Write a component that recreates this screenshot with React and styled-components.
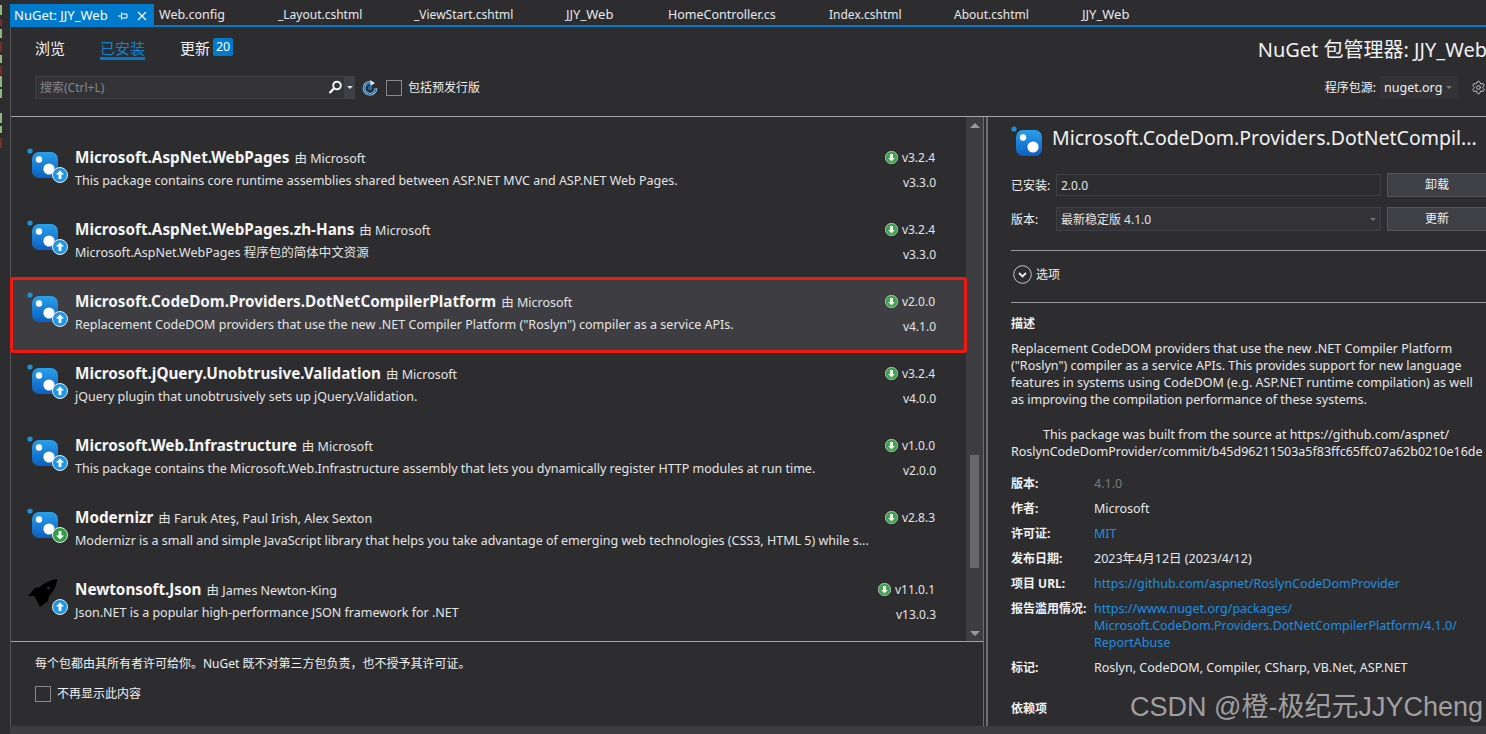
import React from "react";
import styled, { createGlobalStyle } from "styled-components";
import { Settings } from "lucide-react";

const Global = createGlobalStyle`
  html, body { margin: 0; padding: 0; background: #2d2d30; }
  * { box-sizing: border-box; }
`;
const FONT = `"Noto Sans", "Noto Sans CJK SC", sans-serif`;

const Page = styled.div`
  position: relative; width: 1486px; height: 734px; overflow: hidden; display: flex;
  background: #2d2d30; color: #f1f1f1; font: 12px/17px ${FONT};
`;
const Gutter = styled.div`
  width: 10px; flex: none; padding-top: 5px; display: flex; flex-direction: column;
`;
const GutterMark = styled.div`
  width: 2px; flex: none; height: ${p => p.$h}px; margin-bottom: ${p => p.$gap}px; background: ${p => p.$c};
`;
const Main = styled.div`
  flex: 1; min-width: 0; display: flex; flex-direction: column;
`;
const TabStrip = styled.div`
  height: 27px; flex: none; padding-top: 4px; display: flex; border-bottom: 2px solid #007acc;
`;
const ActiveTab = styled.div`
  width: 144px; flex: none; background: #007acc; color: #fff; display: flex; align-items: center; padding: 0 7px 0 4px; margin-bottom: -2px; font-size: 13px;
`;
const TabName = styled.span`
  flex: 1; white-space: nowrap;
`;
const TabGlyph = styled.svg`
  width: 10px; height: 10px; margin-left: 9px; flex: none;
`;
const Tab = styled.div`
  flex: none; width: ${p => p.$w}px; padding-left: 5px; display: flex; align-items: center; color: #e8e8e8; font-size: ${p => p.$fs}px; white-space: nowrap;
`;
const Body = styled.div`
  flex: 1; min-height: 0; display: flex; flex-direction: column; border-left: 1px solid #555558;
`;
const Header = styled.div`
  height: 90px; flex: none; display: flex; justify-content: space-between; padding-left: 24px; border-bottom: 1px solid #a5a5a5;
`;
const HeaderLeft = styled.div`
  display: flex; flex-direction: column;
`;
const Tabs = styled.div`
  display: flex; height: 34px; padding-top: 8px;
`;
const TopTab = styled.div`
  height: 25px; font-size: 15px; line-height: 26px; color: ${p => p.$active ? "#0e82d0" : "#f1f1f1"};
  margin-right: ${p => p.$gap}px; border-bottom: ${p => p.$active ? "3px solid #007acc" : "none"};
  display: flex; align-items: flex-start;
`;
const Count = styled.span`
  margin: 3px 0 0 3px; width: 20px; height: 18px; background: #007acc; color: #fff; border-radius: 2px; font-size: 12.5px; line-height: 18px; text-align: center;
`;
const SearchRow = styled.div`
  display: flex; align-items: center; margin-top: 15px;
`;
const SearchBox = styled.div`
  width: 320px; height: 23px; background: #333337; border: 1px solid #3f3f46; display: flex; align-items: center; justify-content: space-between; padding-left: 4px; color: #858585;
`;
const SearchAffix = styled.div`
  width: 28px; height: 21px; flex: none; display: flex; align-items: center; margin-right: -1px;
`;
const SearchCaret = styled.div`
  width: 11px; height: 21px; flex: none; background: #3f3f46; display: flex; align-items: center; justify-content: center;
  &::after { content: ""; border: 3px solid transparent; border-top: 3px solid #e0e0e0; border-bottom: 0; }
`;
const IconSvg = styled.svg`
  display: block; flex: none;
`;
const OverlaySvg = styled.svg`
  display: block; position: absolute; left: ${p => p.$l}px; top: ${p => p.$t}px;
`;
const RefreshWrap = styled.div`
  margin: 0 8px 0 7px; width: 16px; height: 16px;
`;
const Check = styled.div`
  width: 16px; height: 16px; border: 1px solid #8a8a8a; background: #2d2d30; flex: none;
`;
const CheckLabel = styled.span`
  margin-left: 6px; color: #f1f1f1;
`;
const HeaderRight = styled.div`
  display: flex; flex-direction: column; align-items: flex-end;
`;
const ManagerTitle = styled.div`
  font-size: 20px; line-height: 24px; margin-top: 11px; margin-right: -1px; white-space: nowrap; color: #f1f1f1;
`;
const SourceRow = styled.div`
  display: flex; align-items: center; margin-top: 14px; height: 23px; margin-right: -1px;
`;
const SourceSelect = styled.div`
  width: 78px; height: 23px; margin-left: 4px; background: #333337; padding-left: 4px; display: flex; align-items: center; justify-content: space-between; padding-right: 6px; color: #f1f1f1; font-size: 12.5px;
  &::after { content: ""; border: 3px solid transparent; border-top: 3px solid #777; border-bottom: 0; }
`;
const Gear = styled.div`
  margin-left: 13px; width: 16px; color: #c8c8c8; display: flex;
`;
const Split = styled.div`
  flex: 1; min-height: 0; display: flex;
`;
const LeftPane = styled.div`
  width: 972px; flex: none; display: flex; flex-direction: column;
`;
const ListArea = styled.div`
  height: 525px; flex: none; display: flex; border-bottom: 1px solid #a5a5a5;
`;
const List = styled.div`
  flex: 1; min-width: 0; padding-top: 18px;
`;
const Row = styled.div`
  position: relative; height: 72px; display: flex; padding: 0 30px 0 16px; background: ${p => p.$sel ? "#3e3e42" : "transparent"};
`;
const RedBox = styled.div`
  position: absolute; left: -1px; right: -1px; top: -2px; bottom: -2px; border: 3px solid #f01a10; border-radius: 3px; pointer-events: none;
`;
const IconCell = styled.div`
  position: relative; width: 48px; height: 36px; flex: none; margin-top: 12px;
`;
const RowText = styled.div`
  flex: 1; min-width: 0; padding-top: 14px;
`;
const TitleLine = styled.div`
  display: flex; align-items: baseline; height: 23px; white-space: nowrap;
`;
const PkgName = styled.span`
  font-size: 15.25px; font-weight: 700; color: #f5f5f5;
`;
const Author = styled.span`
  margin-left: 5px; font-size: 12.5px; color: #e4e4e4;
`;
const Desc = styled.div`
  font-size: 12.5px; line-height: 17px; color: #e4e4e4; white-space: nowrap;
`;
const VerCol = styled.div`
  flex: none; width: 90px; padding-top: 14px; display: flex; flex-direction: column; align-items: flex-end; font-size: 12px; line-height: 17px; color: #e4e4e4;
`;
const VerTop = styled.div`
  display: flex; align-items: center; gap: 4px; margin-right: 1px;
`;
const VerBottom = styled.div`
  margin-top: 8px;
`;
const Scrollbar = styled.div`
  width: 17px; flex: none; background: #3e3e42; display: flex; flex-direction: column; align-items: center; padding-top: 6px;
`;
const ArrowUp = styled.div`
  flex: none; border: 5px solid transparent; border-bottom: 5px solid #999; border-top: 0;
`;
const ArrowDown = styled.div`
  flex: none; margin-top: 63px; border: 5px solid transparent; border-top: 5px solid #999; border-bottom: 0;
`;
const Track = styled.div`
  flex: none; margin-top: 327px; height: 113px; width: 9px; background: #686868;
`;
const Notice = styled.div`
  padding: 13px 0 0 24px;
`;
const DontShow = styled.div`
  display: flex; align-items: center; margin-top: 13px;
`;
const SplitLines = styled.div`
  width: 5px; flex: none; height: 100%; border-left: 1px solid #6e6e70; border-right: 2px solid #6e6e70;
`;
const RightPane = styled.div`
  flex: 1; min-width: 0; padding: 8px 0 0 23px; overflow: hidden; font-size: 12px;
`;
const DetailHead = styled.div`
  display: flex; align-items: center; height: 31px; gap: 10px;
`;
const DetailIcon = styled.div`
  position: relative; width: 31px; height: 31px; flex: none;
`;
const DetailTitle = styled.div`
  font-size: 19.5px; white-space: nowrap; margin-top: -6px; color: #f1f1f1;
`;
const FormRow = styled.div`
  display: flex; align-items: center; height: 24px; margin-top: ${p => p.$mt}px;
`;
const FormLabel = styled.div`
  width: 45px; flex: none; color: #f1f1f1;
`;
const Field = styled.div`
  width: 325px; height: ${p => p.$h}px; flex: none; border: 1px solid #3f3f46; background: ${p => p.$select ? "#333337" : "#2d2d30"}; padding: 0 4px; display: flex; align-items: center; justify-content: space-between; color: #e4e4e4;
  &::after { content: ""; display: ${p => p.$select ? "block" : "none"}; border: 3px solid transparent; border-top: 3px solid #777; border-bottom: 0; }
`;
const Btn = styled.div`
  width: 100px; margin-left: 6px; flex: none; height: 24px; background: #3f3f46; border: 1px solid #55555a; text-align: center; line-height: 22px; color: #f1f1f1;
`;
const Rule = styled.div`
  height: 1px; background: #999; margin-top: ${p => p.$mt}px;
`;
const OptionLine = styled.div`
  display: flex; align-items: center; height: 20px; margin-top: 13px; gap: 4px; padding-left: 2px;
`;
const SectionLabel = styled.div`
  margin-top: ${p => p.$mt}px; font-weight: 700; color: #f1f1f1; line-height: 17px;
`;
const Para = styled.div`
  margin-top: ${p => p.$mt}px; line-height: 17px; color: #e8e8e8; white-space: nowrap; font-size: 12.5px; text-indent: ${p => p.$indent || 0}px;
`;
const Meta = styled.div`
  display: grid; grid-template-columns: 83px 1fr; margin-top: ${p => p.$mt}px; line-height: 17px;
`;
const MetaKey = styled.div`
  font-weight: 700; color: #f1f1f1;
`;
const MetaVal = styled.div`
  font-size: 12.5px; color: ${p => p.$muted ? "#7a7a7a" : p.$link ? "#1a8fe3" : "#e8e8e8"}; white-space: nowrap;
`;
const BottomBar = styled.div`
  position: absolute; left: 10px; right: 0; bottom: 0; height: 8px; background: #3e3e42;
`;
const Watermark = styled.div`
  position: absolute; left: 1130px; top: 689px; font: 27px/36px "Liberation Sans", "Noto Sans CJK SC", sans-serif; color: rgba(205,205,205,0.72); white-space: nowrap;
`;

const NugetIcon = ({ id }) => (
  <OverlaySvg width="31" height="31" viewBox="0 0 31 31" $l={0} $t={0}>
    <defs>
      <linearGradient id={id} x1="0" y1="0" x2="0" y2="1">
        <stop offset="0" stopColor="#2aa0ea" />
        <stop offset="1" stopColor="#0b5fc0" />
      </linearGradient>
    </defs>
    <circle cx="3" cy="4" r="2.6" fill="#1d8fd6" />
    <rect x="5" y="5" width="26" height="26" rx="7" fill={`url(#${id})`} />
    <circle cx="12" cy="12.5" r="3.2" fill="#fff" />
    <circle cx="22" cy="22" r="5.6" fill="#fff" />
  </OverlaySvg>
);
const Badge = ({ down }) => (
  <OverlaySvg width="16" height="16" viewBox="0 0 16 16" $l={25} $t={20}>
    <circle cx="8" cy="8" r="7.5" fill={down ? "#2f9e44" : "#1c97ea"} stroke="#e8e8e8" strokeWidth="1" />
    <path d={down ? "M8 12.5 L4 8.5 H6.6 V4 H9.4 V8.5 H12 Z" : "M8 3.5 L12 7.5 H9.4 V12 H6.6 V7.5 H4 Z"} fill="#fff" />
  </OverlaySvg>
);
const Rocket = () => (
  <OverlaySvg width="31" height="30" viewBox="0 0 31 30" $l={1} $t={0}>
    <path d="M29 0 C22 1 16 4 12 8 L7 9 L0 17 L6 17 L8 20 L12 28 L20 22 L21 17 C26 12 29 6 29 0 Z" fill="#000" />
    <circle cx="20.5" cy="9" r="1.6" fill="#2d2d30" />
  </OverlaySvg>
);
const UpdateDot = () => (
  <IconSvg width="13" height="13" viewBox="0 0 13 13">
    <circle cx="6.5" cy="6.5" r="6.2" fill="#3fa34d" stroke="#d8d8d8" strokeWidth="0.7" />
    <path d="M6.5 10.5 L3.3 7 H5.2 V3 H7.8 V7 H9.7 Z" fill="#fff" />
  </IconSvg>
);

const marks = [
  [10, "#8fb77f", 4], [7, "#7a2a2a", 3], [9, "#8fb77f", 4], [10, "#7a2a2a", 3], [8, "#8fb77f", 3],
  [9, "#7a2a2a", 1], [11, "#8fb77f", 2], [9, "#8fb77f", 15], [10, "#8fb77f", 3], [7, "#8fb77f", 5], [10, "#7a2a2a", 0],
];
const rows = [
  { name: "Microsoft.AspNet.WebPages", by: "Microsoft", desc: "This package contains core runtime assemblies shared between ASP.NET MVC and ASP.NET Web Pages.", a: "v3.2.4", b: "v3.3.0" },
  { name: "Microsoft.AspNet.WebPages.zh-Hans", by: "Microsoft", desc: "Microsoft.AspNet.WebPages 程序包的简体中文资源", a: "v3.2.4", b: "v3.3.0" },
  { name: "Microsoft.CodeDom.Providers.DotNetCompilerPlatform", by: "Microsoft", desc: 'Replacement CodeDOM providers that use the new .NET Compiler Platform ("Roslyn") compiler as a service APIs.', a: "v2.0.0", b: "v4.1.0", sel: true },
  { name: "Microsoft.jQuery.Unobtrusive.Validation", by: "Microsoft", desc: "jQuery plugin that unobtrusively sets up jQuery.Validation.", a: "v3.2.4", b: "v4.0.0" },
  { name: "Microsoft.Web.Infrastructure", by: "Microsoft", desc: "This package contains the Microsoft.Web.Infrastructure assembly that lets you dynamically register HTTP modules at run time.", a: "v1.0.0", b: "v2.0.0" },
  { name: "Modernizr", by: "Faruk Ateş, Paul Irish, Alex Sexton", desc: "Modernizr is a small and simple JavaScript library that helps you take advantage of emerging web technologies (CSS3, HTML 5) while s...", a: "v2.8.3", down: true },
  { name: "Newtonsoft.Json", by: "James Newton-King", desc: "Json.NET is a popular high-performance JSON framework for .NET", a: "v11.0.1", b: "v13.0.3", rocket: true },
];
const tabs = [
  ["Web.config", 119, 12.5], ["_Layout.cshtml", 136, 12], ["_ViewStart.cshtml", 152, 12], ["JJY_Web", 102, 13],
  ["HomeController.cs", 161, 12.5], ["Index.cshtml", 125, 12], ["About.cshtml", 128, 12], ["JJY_Web", 100, 13],
];

export default function App() {
  return (
    <Page>
      <Global />
      <Gutter>
        {marks.map(([h, c, gap], i) => <GutterMark key={i} $h={h} $c={c} $gap={gap} />)}
      </Gutter>
      <Main>
        <TabStrip>
          <ActiveTab>
            <TabName>NuGet: JJY_Web</TabName>
            <TabGlyph viewBox="0 0 10 10"><path d="M0 5h3.5M3.5 1.5v7M3.5 3h5.5v4H3.5" stroke="#fff" fill="none" /></TabGlyph>
            <TabGlyph viewBox="0 0 10 10"><path d="M1 1l8 8M9 1l-8 8" stroke="#fff" strokeWidth="1.2" /></TabGlyph>
          </ActiveTab>
          {tabs.map(([t, w, fs], i) => <Tab key={i} $w={w} $fs={fs}>{t}</Tab>)}
        </TabStrip>
        <Body>
          <Header>
            <HeaderLeft>
              <Tabs>
                <TopTab $gap={35}>浏览</TopTab>
                <TopTab $gap={35} $active>已安装</TopTab>
                <TopTab $gap={0}>更新<Count>20</Count></TopTab>
              </Tabs>
              <SearchRow>
                <SearchBox>
                  搜索(Ctrl+L)
                  <SearchAffix>
                    <IconSvg width="17" height="17" viewBox="0 0 17 17">
                      <circle cx="10" cy="6.5" r="3.8" fill="none" stroke="#f0f0f0" strokeWidth="2" />
                      <path d="M7 9.5 L2.5 14" stroke="#f0f0f0" strokeWidth="2.4" />
                    </IconSvg>
                    <SearchCaret />
                  </SearchAffix>
                </SearchBox>
                <RefreshWrap>
                  <IconSvg width="16" height="16" viewBox="0 0 16 16">
                    <path d="M8 2.2 A6 6 0 1 0 14 8" fill="none" stroke="#d8e8f4" strokeWidth="2.6" />
                    <path d="M8 2.2 A6 6 0 1 0 14 8" fill="none" stroke="#0e70c0" strokeWidth="1.4" />
                    <path d="M8 0 L13 3 L8.5 6 Z" fill="#d8e8f4" />
                    <circle cx="8" cy="8" r="2.2" fill="#0e70c0" />
                  </IconSvg>
                </RefreshWrap>
                <Check />
                <CheckLabel>包括预发行版</CheckLabel>
              </SearchRow>
            </HeaderLeft>
            <HeaderRight>
              <ManagerTitle>NuGet 包管理器: JJY_Web</ManagerTitle>
              <SourceRow>
                程序包源:
                <SourceSelect>nuget.org</SourceSelect>
                <Gear><Settings size={15} strokeWidth={1.6} /></Gear>
              </SourceRow>
            </HeaderRight>
          </Header>
          <Split>
            <LeftPane>
              <ListArea>
                <List>
                  {rows.map((r, i) => (
                    <Row key={r.name} $sel={r.sel}>
                      {r.sel && <RedBox />}
                      <IconCell>
                        {r.rocket ? <Rocket /> : <NugetIcon id={`ng${i}`} />}
                        <Badge down={r.down} />
                      </IconCell>
                      <RowText>
                        <TitleLine><PkgName>{r.name}</PkgName><Author>由 {r.by}</Author></TitleLine>
                        <Desc>{r.desc}</Desc>
                      </RowText>
                      <VerCol>
                        <VerTop><UpdateDot />{r.a}</VerTop>
                        {r.b && <VerBottom>{r.b}</VerBottom>}
                      </VerCol>
                    </Row>
                  ))}
                </List>
                <Scrollbar>
                  <ArrowUp />
                  <Track />
                  <ArrowDown />
                </Scrollbar>
              </ListArea>
              <Notice>
                每个包都由其所有者许可给你。NuGet 既不对第三方包负责，也不授予其许可证。
                <DontShow><Check /><CheckLabel>不再显示此内容</CheckLabel></DontShow>
              </Notice>
            </LeftPane>
            <SplitLines />
            <RightPane>
              <DetailHead>
                <DetailIcon><NugetIcon id="ngd" /></DetailIcon>
                <DetailTitle>Microsoft.CodeDom.Providers.DotNetCompil...</DetailTitle>
              </DetailHead>
              <FormRow $mt={17}>
                <FormLabel>已安装:</FormLabel>
                <Field $h={22}>2.0.0</Field>
                <Btn>卸载</Btn>
              </FormRow>
              <FormRow $mt={10}>
                <FormLabel>版本:</FormLabel>
                <Field $h={24} $select>最新稳定版 4.1.0</Field>
                <Btn>更新</Btn>
              </FormRow>
              <Rule $mt={19} />
              <OptionLine>
                <IconSvg width="19" height="19" viewBox="0 0 19 19">
                  <circle cx="9.5" cy="9.5" r="8.8" fill="none" stroke="#c8c8c8" />
                  <path d="M6 8 L9.5 11.5 L13 8" fill="none" stroke="#f1f1f1" strokeWidth="1.8" />
                </IconSvg>
                选项
              </OptionLine>
              <Rule $mt={18} />
              <SectionLabel $mt={12}>描述</SectionLabel>
              <Para $mt={8}>
                Replacement CodeDOM providers that use the new .NET Compiler Platform<br />
                ("Roslyn") compiler as a service APIs. This provides support for new language<br />
                features in systems using CodeDOM (e.g. ASP.NET runtime compilation) as well<br />
                as improving the compilation performance of these systems.
              </Para>
              <Para $mt={18} $indent={32}>
                This package was built from the source at https://github.com/aspnet/<br />
                RoslynCodeDomProvider/commit/b45d96211503a5f83ffc65ffc07a62b0210e16de
              </Para>
              <Meta $mt={15}><MetaKey>版本:</MetaKey><MetaVal $muted>4.1.0</MetaVal></Meta>
              <Meta $mt={8}><MetaKey>作者:</MetaKey><MetaVal>Microsoft</MetaVal></Meta>
              <Meta $mt={8}><MetaKey>许可证:</MetaKey><MetaVal $link>MIT</MetaVal></Meta>
              <Meta $mt={8}><MetaKey>发布日期:</MetaKey><MetaVal>2023年4月12日 (2023/4/12)</MetaVal></Meta>
              <Meta $mt={8}><MetaKey>项目 URL:</MetaKey><MetaVal $link>https://github.com/aspnet/RoslynCodeDomProvider</MetaVal></Meta>
              <Meta $mt={8}>
                <MetaKey>报告滥用情况:</MetaKey>
                <MetaVal $link>https://www.nuget.org/packages/<br />Microsoft.CodeDom.Providers.DotNetCompilerPlatform/4.1.0/<br />ReportAbuse</MetaVal>
              </Meta>
              <Meta $mt={8}><MetaKey>标记:</MetaKey><MetaVal>Roslyn, CodeDOM, Compiler, CSharp, VB.Net, ASP.NET</MetaVal></Meta>
              <SectionLabel $mt={24}>依赖项</SectionLabel>
            </RightPane>
          </Split>
        </Body>
      </Main>
      <BottomBar />
      <Watermark>CSDN @橙-极纪元JJYCheng</Watermark>
    </Page>
  );
}
